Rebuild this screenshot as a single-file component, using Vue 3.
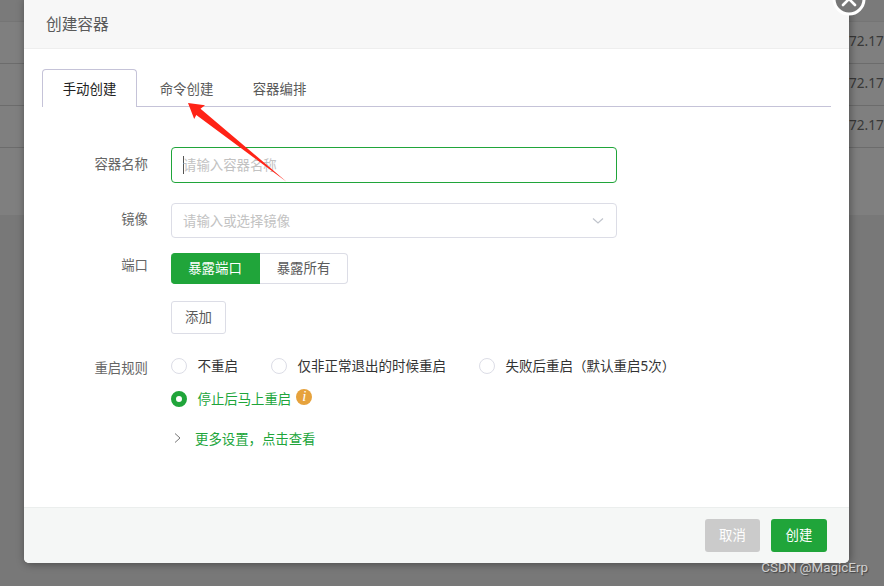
<script setup>
import { ref } from 'vue'

const activeTab = ref('manual')
const portMode = ref('some')
const restart = ref('always')
const name = ref('')

const hosts = ['72.17', '72.17', '72.17']

const tabs = [
  { id: 'manual', label: '手动创建' },
  { id: 'command', label: '命令创建' },
  { id: 'compose', label: '容器编排' },
]

const portModes = [
  { id: 'some', label: '暴露端口' },
  { id: 'all', label: '暴露所有' },
]

const restartRules = [
  { id: 'no', label: '不重启' },
  { id: 'on-failure', label: '仅非正常退出的时候重启' },
  { id: 'retry', label: '失败后重启（默认重启5次）' },
  { id: 'always', label: '停止后马上重启', tip: true },
]
</script>

<template>
  <div class="page">
    <!-- Container table behind the dialog -->
    <div class="table">
      <div class="table-head"></div>
      <div v-for="(host, i) in hosts" :key="i" class="table-row">{{ host }}</div>
    </div>

    <!-- Dialog -->
    <div class="dialog">
      <div class="dialog-header">创建容器</div>
      <svg class="close" viewBox="0 0 34 34">
        <circle cx="17" cy="17" r="15" fill="#777" stroke="#fff" stroke-width="3" />
        <path d="M11 11L23 23M23 11L11 23" stroke="#fff" stroke-width="2.6" stroke-linecap="round" />
      </svg>

      <div class="dialog-body">
        <div class="tabs">
          <button
            v-for="tab in tabs"
            :key="tab.id"
            class="tab"
            :class="{ active: activeTab === tab.id }"
            @click="activeTab = tab.id"
          >
            {{ tab.label }}
          </button>
        </div>

        <div class="form">
          <div class="form-row name-row">
            <label class="label">容器名称</label>
            <div class="field focused">
              <span class="caret"></span>
              <input v-model="name" class="input" placeholder="请输入容器名称" />
            </div>
          </div>

          <div class="form-row image-row">
            <label class="label">镜像</label>
            <div class="field">
              <input class="input" placeholder="请输入或选择镜像" />
              <svg class="chevron" viewBox="0 0 12 8" fill="none">
                <path d="M1 1.500L6 6L11 1.500" stroke="#c0c4cc" stroke-width="1.2" />
              </svg>
            </div>
          </div>

          <div class="form-row port-row">
            <label class="label">端口</label>
            <div class="segment">
              <button
                v-for="mode in portModes"
                :key="mode.id"
                class="segment-item"
                :class="{ active: portMode === mode.id }"
                @click="portMode = mode.id"
              >
                {{ mode.label }}
              </button>
            </div>
          </div>

          <div class="form-row add-row">
            <span class="label"></span>
            <button class="btn-plain">添加</button>
          </div>

          <div class="form-row rule-row">
            <label class="label">重启规则</label>
            <div class="radios">
              <div
                v-for="rule in restartRules"
                :key="rule.id"
                class="radio"
                :class="{ checked: restart === rule.id }"
                @click="restart = rule.id"
              >
                <span class="dot"></span>
                <span class="radio-text">{{ rule.label }}</span>
                <span v-if="rule.tip" class="tip">i</span>
              </div>
            </div>
          </div>

          <div class="form-row more-row">
            <span class="label"></span>
            <svg class="arrow" viewBox="0 0 8 12" fill="none">
              <path d="M1 1.500L6 6L1 10.500" stroke="#777" stroke-width="1" />
            </svg>
            <span class="more">更多设置，点击查看</span>
          </div>
        </div>
      </div>

      <div class="dialog-footer">
        <button class="btn cancel">取消</button>
        <button class="btn create">创建</button>
      </div>
    </div>

    <!-- Annotation arrow -->
    <svg class="pointer" viewBox="0 0 100 80">
      <path d="M0 0L17 2.200L12.500 5.700L98.500 78.700L8.300 12L6.200 16Z" fill="#ff2316" />
    </svg>

    <span class="watermark">CSDN @MagicErp</span>
  </div>
</template>

<style>
body {
  margin: 0;
  overflow: hidden;
}
</style>

<style scoped>
.page {
  position: relative;
  width: 884px;
  height: 586px;
  overflow: hidden;
  background: #787878;
  font-family: 'Noto Sans', 'Noto Sans CJK SC', sans-serif;
  font-size: 13.4px;
  color: #5a5a5a;
}

button,
input {
  margin: 0;
  padding: 0;
  border: none;
  background: none;
  font: inherit;
  color: inherit;
  outline: none;
}

/* Table */
.table {
  height: 215px;
  background: #7f7f7f;
}

.table-head {
  height: 21px;
  background: #7a7a7a;
  border-bottom: 1px solid #757575;
}

.table-row {
  box-sizing: border-box;
  height: 42px;
  padding-left: 849px;
  border-bottom: 1px solid #6c6c6c;
  font-size: 13.6px;
  line-height: 38px;
  color: #383838;
}

/* Dialog */
.dialog {
  position: absolute;
  top: -4px;
  left: 24px;
  display: flex;
  flex-direction: column;
  width: 825px;
  height: 567px;
  border-radius: 5px;
  background: #fff;
  box-shadow: 1px 1px 8px rgba(0, 0, 0, 0.4);
}

.dialog-header {
  height: 52px;
  padding: 0 22px;
  border-bottom: 1px solid #eee;
  border-radius: 5px 5px 0 0;
  background: #f7f7f7;
  font-size: 15.7px;
  line-height: 56px;
}

.close {
  position: absolute;
  top: -14px;
  right: -17px;
  width: 34px;
  height: 34px;
}

.dialog-body {
  flex: 1;
  padding: 20px 18px 0;
}

/* Tabs */
.tabs {
  display: flex;
  height: 37px;
  border-bottom: 1px solid #c5c3d8;
}

.tab {
  box-sizing: border-box;
  width: 93px;
  height: 38px;
  padding-bottom: 1px;
  border: 1px solid transparent;
  border-bottom: none;
}

.tab.active {
  width: 95px;
  margin-right: 3px;
  border-color: #c5c3d8;
  border-radius: 4px 4px 0 0;
  background: #fff;
  color: #222;
}

/* Form */
.form {
  padding: 40px 0 0;
}

.form-row {
  display: flex;
}

.label {
  flex-shrink: 0;
  width: 106px;
  margin-right: 23px;
  text-align: right;
  color: #666;
}

.field {
  box-sizing: border-box;
  display: flex;
  align-items: center;
  width: 446px;
  height: 35px;
  padding: 0 12px 0 11px;
  border: 1px solid #dcdde6;
  border-radius: 4px;
}

.field.focused {
  height: 36px;
  border-color: #20a53a;
}

.caret {
  width: 1px;
  height: 18px;
  margin-right: -1px;
  background: #555;
}

.input {
  flex: 1;
  min-width: 0;
  color: #555;
}

.input::placeholder {
  color: #c2c2c2;
  opacity: 1;
}

.chevron {
  width: 12px;
  height: 8px;
}

.name-row .label {
  line-height: 34px;
}

.image-row {
  margin-top: 20px;
}

.image-row .label {
  line-height: 33px;
}

.port-row {
  margin-top: 15px;
}

.port-row .label {
  line-height: 25px;
}

.segment {
  display: flex;
  height: 31px;
}

.segment-item {
  box-sizing: border-box;
  width: 88px;
  padding-bottom: 3px;
  border: 1px solid #dcdde6;
  border-left: none;
  border-radius: 0 4px 4px 0;
}

.segment-item.active {
  width: 89px;
  border-color: #20a53a;
  border-radius: 4px 0 0 4px;
  background: #20a53a;
  color: #fff;
}

.add-row {
  margin-top: 17px;
}

.btn-plain {
  width: 55px;
  height: 33px;
  padding-bottom: 3px;
  border: 1px solid #dcdde6;
  border-radius: 3px;
  box-sizing: border-box;
}

.rule-row {
  margin-top: 15px;
}

.rule-row .label {
  line-height: 38px;
}

.radios {
  display: flex;
  flex-wrap: wrap;
  column-gap: 33px;
  width: 540px;
}

.radio {
  display: flex;
  align-items: center;
  height: 33px;
  font-size: 13.5px;
  color: #333;
}

.radio-text {
  padding-bottom: 2px;
}

.dot {
  box-sizing: border-box;
  width: 16px;
  height: 16px;
  margin-right: 10.5px;
  border: 1px solid #dcdde6;
  border-radius: 50%;
}

.checked .dot {
  border: 5.5px solid #20a53a;
}

.radio.checked {
  color: #20a53a;
}

.radio.checked .radio-text {
  font-size: 13.4px;
}

.tip {
  width: 16px;
  height: 16px;
  margin: -4px 0 0 5px;
  border-radius: 50%;
  background: #e6a23c;
  font: italic 15px/15px 'Liberation Serif', serif;
  text-align: center;
  color: #fff;
}

.more-row {
  align-items: center;
  height: 20px;
  margin-top: 13px;
}

.arrow {
  width: 8px;
  height: 12px;
  margin: 0 13px 0 3px;
}

.more {
  color: #20a53a;
}

/* Footer */
.dialog-footer {
  display: flex;
  justify-content: flex-end;
  gap: 11px;
  height: 44px;
  padding: 11px 22px 0;
  border-top: 1px solid #ebeeed;
  border-radius: 0 0 5px 5px;
  background: #f5f7f6;
}

.btn {
  width: 56px;
  height: 33px;
  padding-bottom: 3px;
  border-radius: 3px;
  color: #fff;
}

.cancel {
  width: 55px;
  background: #cbcbcb;
}

.create {
  background: #20a53a;
}

.pointer {
  position: absolute;
  top: 103px;
  left: 188px;
  width: 100px;
  height: 80px;
}

.watermark {
  position: absolute;
  right: 16px;
  bottom: 8px;
  font-family: Roboto, 'Liberation Sans', sans-serif;
  font-size: 13.4px;
  line-height: 20px;
  color: #d0d0d0;
  text-shadow: 1px 1px 1px #444;
}
</style>
